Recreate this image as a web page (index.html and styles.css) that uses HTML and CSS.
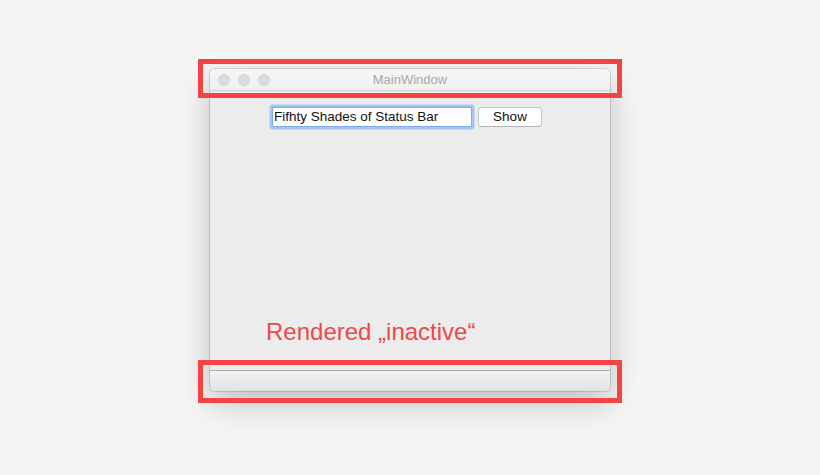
FILE: index.html
```html
<!DOCTYPE html>
<html>
<head>
<meta charset="utf-8">
<link rel="stylesheet" href="styles.css">
</head>
<body>
<div class="stage">
  <div class="window">
    <div class="titlebar">
      <div class="lights">
        <span class="light"></span>
        <span class="light"></span>
        <span class="light"></span>
      </div>
      <div class="title">MainWindow</div>
    </div>
    <div class="content">
      <div class="toolbar">
        <div class="field">Fifhty Shades of Status Bar</div>
        <div class="button">Show</div>
      </div>
      <div class="note">Rendered „inactive“</div>
    </div>
    <div class="statusbar"></div>
  </div>
  <div class="mark mark-top"></div>
  <div class="mark mark-bottom"></div>
</div>
</body>
</html>
```

FILE: styles.css
```css
html, body {
  margin: 0;
  padding: 0;
  background: #f5f5f5;
}
.stage {
  position: relative;
  width: 820px;
  height: 475px;
  box-sizing: border-box;
  padding: 69px 0 0 210px;
  font-family: "Liberation Sans", Arial, sans-serif;
}
.window {
  width: 400px;
  height: 322px;
  display: flex;
  flex-direction: column;
  background: #ececec;
  border-radius: 5px;
  box-shadow: 0 0 0 1px rgba(0,0,0,0.13), 0 12px 32px rgba(0,0,0,0.22);
  overflow: hidden;
}
.titlebar {
  height: 21px;
  border-bottom: 1px solid #d3d3d3;
  background: linear-gradient(#f6f6f6, #f0f0f0);
  display: flex;
  align-items: center;
  position: relative;
}
.lights {
  display: flex;
  gap: 8px;
  padding-left: 8px;
}
.light {
  width: 12px;
  height: 12px;
  box-sizing: border-box;
  border-radius: 50%;
  background: #dcdcdc;
  border: 1px solid #d2d2d2;
}
.title {
  position: absolute;
  left: 0;
  right: 0;
  text-align: center;
  font-size: 13px;
  color: #a8a8a8;
  line-height: 21px;
}
.content {
  flex: 1;
  display: flex;
  flex-direction: column;
}
.toolbar {
  display: flex;
  align-items: center;
  padding: 16px 0 0 62px;
}
.field {
  width: 200px;
  height: 20px;
  box-sizing: border-box;
  background: #fff;
  border: 1px solid #7fabe4;
  box-shadow: 0 0 0 2.5px #a3c7f2;
  border-radius: 1px;
  font-size: 13.5px;
  line-height: 18px;
  padding-left: 1px;
  color: #111;
}
.button {
  margin-left: 6px;
  width: 64px;
  height: 20px;
  box-sizing: border-box;
  background: #fff;
  border: 1px solid #c3c3c3;
  border-bottom-color: #b3b3b3;
  border-radius: 4px;
  font-size: 13.5px;
  line-height: 18px;
  text-align: center;
  color: #111;
}
.note {
  margin-top: 190px;
  padding-left: 56px;
  font-size: 24px;
  line-height: 30px;
  color: #ee4848;
}
.statusbar {
  height: 20px;
  border-top: 1px solid #a9a9a9;
  background: linear-gradient(#f3f3f3, #e2e2e2);
  border-radius: 0 0 5px 5px;
}
.mark {
  position: absolute;
  border: 5px solid #f44343;
  box-sizing: border-box;
}
.mark-top {
  left: 198px;
  top: 59px;
  width: 424px;
  height: 39px;
}
.mark-bottom {
  left: 198px;
  top: 360px;
  width: 424px;
  height: 43px;
}
```
